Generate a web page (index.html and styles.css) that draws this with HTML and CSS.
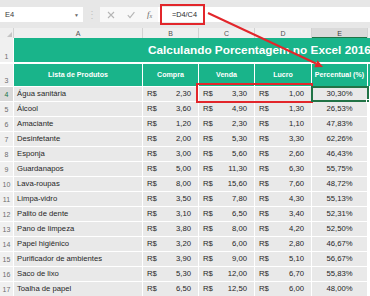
FILE: index.html
```html
<!DOCTYPE html>
<html lang="pt-BR">
<head>
<meta charset="utf-8">
<title>Calculando Porcentagem no Excel 2016</title>
<link rel="stylesheet" href="styles.css">
</head>
<body>
<div class="app">
  <div class="fbar">
    <div class="namebox"><span>E4</span><span class="dd">▼</span></div>
    <div class="grip">⋮</div>
    <div class="fbtns">
      <svg class="ico" width="8" height="8" viewBox="0 0 8 8"><path d="M1 1L7 7M7 1L1 7" stroke="#b5b5b5" stroke-width="1.1" fill="none"/></svg>
      <svg class="ico" width="8" height="8" viewBox="0 0 8 8"><path d="M0.8 4.2L3 6.6L7.4 1.2" stroke="#b5b5b5" stroke-width="1.1" fill="none"/></svg>
      <span class="fx">f<sub>x</sub></span>
    </div>
    <div class="finput">=D4/C4</div>
  </div>

  <div class="sheet">
    <div class="row colhdr">
      <div class="ch corner"><span class="tri"></span></div>
      <div class="ch">A</div>
      <div class="ch">B</div>
      <div class="ch">C</div>
      <div class="ch">D</div>
      <div class="ch sel">E</div>
      <div class="ch"></div>
    </div>

    <div class="row r1">
      <div class="rh">1</div>
      <div class="title">Calculando Porcentagem no Excel 2016</div>
    </div>

    <div class="row r3">
      <div class="rh">3</div>
      <div class="h">Lista de Produtos</div>
      <div class="h">Compra</div>
      <div class="h">Venda</div>
      <div class="h">Lucro</div>
      <div class="h">Percentual (%)</div>
      <div class="h"></div>
    </div>

    <div class="row data active">
      <div class="rh">4</div><div class="c name">Água sanitária</div>
      <div class="c money"><span>R$</span><span>2,30</span></div>
      <div class="c money"><span>R$</span><span>3,30</span></div>
      <div class="c money"><span>R$</span><span>1,00</span></div>
      <div class="c pct">30,30%</div><div class="f"></div>
    </div>
    <div class="row data">
      <div class="rh">5</div><div class="c name">Álcool</div>
      <div class="c money"><span>R$</span><span>3,60</span></div>
      <div class="c money"><span>R$</span><span>4,90</span></div>
      <div class="c money"><span>R$</span><span>1,30</span></div>
      <div class="c pct">26,53%</div><div class="f"></div>
    </div>
    <div class="row data">
      <div class="rh">6</div><div class="c name">Amaciante</div>
      <div class="c money"><span>R$</span><span>1,20</span></div>
      <div class="c money"><span>R$</span><span>2,30</span></div>
      <div class="c money"><span>R$</span><span>1,10</span></div>
      <div class="c pct">47,83%</div><div class="f"></div>
    </div>
    <div class="row data">
      <div class="rh">7</div><div class="c name">Desinfetante</div>
      <div class="c money"><span>R$</span><span>2,00</span></div>
      <div class="c money"><span>R$</span><span>5,30</span></div>
      <div class="c money"><span>R$</span><span>3,30</span></div>
      <div class="c pct">62,26%</div><div class="f"></div>
    </div>
    <div class="row data">
      <div class="rh">8</div><div class="c name">Esponja</div>
      <div class="c money"><span>R$</span><span>3,00</span></div>
      <div class="c money"><span>R$</span><span>5,60</span></div>
      <div class="c money"><span>R$</span><span>2,60</span></div>
      <div class="c pct">46,43%</div><div class="f"></div>
    </div>
    <div class="row data">
      <div class="rh">9</div><div class="c name">Guardanapos</div>
      <div class="c money"><span>R$</span><span>5,00</span></div>
      <div class="c money"><span>R$</span><span>11,30</span></div>
      <div class="c money"><span>R$</span><span>6,30</span></div>
      <div class="c pct">55,75%</div><div class="f"></div>
    </div>
    <div class="row data">
      <div class="rh">10</div><div class="c name">Lava-roupas</div>
      <div class="c money"><span>R$</span><span>8,00</span></div>
      <div class="c money"><span>R$</span><span>15,60</span></div>
      <div class="c money"><span>R$</span><span>7,60</span></div>
      <div class="c pct">48,72%</div><div class="f"></div>
    </div>
    <div class="row data">
      <div class="rh">11</div><div class="c name">Limpa-vidro</div>
      <div class="c money"><span>R$</span><span>3,50</span></div>
      <div class="c money"><span>R$</span><span>7,80</span></div>
      <div class="c money"><span>R$</span><span>4,30</span></div>
      <div class="c pct">55,13%</div><div class="f"></div>
    </div>
    <div class="row data">
      <div class="rh">12</div><div class="c name">Palito de dente</div>
      <div class="c money"><span>R$</span><span>3,10</span></div>
      <div class="c money"><span>R$</span><span>6,50</span></div>
      <div class="c money"><span>R$</span><span>3,40</span></div>
      <div class="c pct">52,31%</div><div class="f"></div>
    </div>
    <div class="row data">
      <div class="rh">13</div><div class="c name">Pano de limpeza</div>
      <div class="c money"><span>R$</span><span>3,80</span></div>
      <div class="c money"><span>R$</span><span>8,00</span></div>
      <div class="c money"><span>R$</span><span>4,20</span></div>
      <div class="c pct">52,50%</div><div class="f"></div>
    </div>
    <div class="row data">
      <div class="rh">14</div><div class="c name">Papel higiênico</div>
      <div class="c money"><span>R$</span><span>3,20</span></div>
      <div class="c money"><span>R$</span><span>6,00</span></div>
      <div class="c money"><span>R$</span><span>2,80</span></div>
      <div class="c pct">46,67%</div><div class="f"></div>
    </div>
    <div class="row data">
      <div class="rh">15</div><div class="c name">Purificador de ambientes</div>
      <div class="c money"><span>R$</span><span>3,90</span></div>
      <div class="c money"><span>R$</span><span>9,00</span></div>
      <div class="c money"><span>R$</span><span>5,10</span></div>
      <div class="c pct">56,67%</div><div class="f"></div>
    </div>
    <div class="row data">
      <div class="rh">16</div><div class="c name">Saco de lixo</div>
      <div class="c money"><span>R$</span><span>5,30</span></div>
      <div class="c money"><span>R$</span><span>12,00</span></div>
      <div class="c money"><span>R$</span><span>6,70</span></div>
      <div class="c pct">55,83%</div><div class="f"></div>
    </div>
    <div class="row data">
      <div class="rh">17</div><div class="c name">Toalha de papel</div>
      <div class="c money"><span>R$</span><span>6,50</span></div>
      <div class="c money"><span>R$</span><span>12,50</span></div>
      <div class="c money"><span>R$</span><span>6,00</span></div>
      <div class="c pct">48,00%</div><div class="f"></div>
    </div>
  </div>

  <div class="redbox formula-mark"></div>
  <div class="redbox cells-mark"></div>
  <div class="selbox"><span class="handle"></span></div>
  <svg class="arrow" width="370" height="296" viewBox="0 0 370 296">
    <line x1="208" y1="13" x2="316" y2="63.5" stroke="#e2262b" stroke-width="2"/>
    <polygon points="323,67 314.3,67.2 317.5,60.2" fill="#e2262b"/>
  </svg>
</div>
</body>
</html>
```

FILE: styles.css
```css
* { box-sizing: border-box; margin: 0; padding: 0; }

html, body {
  width: 370px;
  height: 296px;
  overflow: hidden;
  background: #ffffff;
}

body {
  font-family: "Liberation Sans", Arial, sans-serif;
  color: #262626;
}

.app {
  position: relative;
  width: 370px;
  height: 296px;
  overflow: hidden;
}

/* ---------- formula bar ---------- */
.fbar {
  height: 28px;
  background: #e7e7e7;
  display: flex;
  align-items: flex-start;
  padding-top: 7px;
}

.namebox {
  width: 83px;
  height: 15px;
  background: #ffffff;
  display: flex;
  align-items: center;
  justify-content: space-between;
  padding: 0 4px 0 5px;
  font-size: 7.5px;
  color: #3a3a3a;
}

.dd { font-size: 5px; color: #6a6a6a; }

.grip {
  width: 17px;
  height: 15px;
  display: flex;
  align-items: center;
  justify-content: center;
  color: #c2c2c2;
  font-size: 10px;
}

.fbtns {
  width: 58px;
  height: 15px;
  background: #f8f8f8;
  display: flex;
  align-items: center;
  padding-left: 7px;
  gap: 12px;
}

.fx {
  font-family: "Liberation Serif", serif;
  font-style: italic;
  font-size: 9px;
  color: #6a6a6a;
  line-height: 1;
}
.fx sub { font-size: 6px; vertical-align: -1px; }

.finput {
  flex: 1;
  height: 15px;
  background: #ffffff;
  padding-left: 14px;
  font-size: 7.3px;
  line-height: 15px;
  color: #2a2a2a;
}

/* ---------- sheet ---------- */
.sheet {
  background: #ffffff;
  display: flex;
  flex-direction: column;
}

.row {
  display: grid;
  grid-template-columns: 13px 128px 55px 55px 56px 55px 1fr;
  column-gap: 1px;
}

.colhdr {
  height: 10px;
  background: #d2d2d2;
}
.ch {
  background: #efefef;
  font-size: 7px;
  color: #505050;
  display: flex;
  align-items: center;
  justify-content: center;
  line-height: 1;
}
.ch.sel { background: #dadada; color: #3c3c3c; box-shadow: inset 0 -1px 0 #217346; }
.corner { position: relative; }
.tri {
  position: absolute;
  right: 1px;
  bottom: 1px;
  width: 0;
  height: 0;
  border-left: 5px solid transparent;
  border-bottom: 5px solid #c4c4c4;
}

.rh {
  background: #f0f0f0;
  font-size: 7px;
  color: #6e6e6e;
  display: flex;
  align-items: center;
  justify-content: center;
}

.r1 { height: 24px; margin-bottom: 2px; }
.r1 .rh, .r3 .rh { align-items: flex-end; padding-bottom: 2px; }

.title {
  grid-column: 2 / -1;
  background: #19b48a;
  color: #ffffff;
  font-weight: bold;
  font-size: 11.8px;
  padding-left: 134px;
  white-space: nowrap;
  overflow: hidden;
  display: flex;
  align-items: center;
}

.r3 { height: 22px; margin-bottom: 1px; }
.h {
  background: #19b48a;
  color: #ffffff;
  font-weight: bold;
  font-size: 7.1px;
  display: flex;
  align-items: center;
  justify-content: center;
  white-space: nowrap;
}

.data { height: 14px; margin-bottom: 1px; }
.c {
  background: #e9e9e9;
  font-size: 7.7px;
  line-height: 14px;
  white-space: nowrap;
  overflow: hidden;
}
.name { padding-left: 3px; }
.money {
  display: flex;
  justify-content: space-between;
  padding: 0 7px 0 4px;
}
.pct { text-align: center; }
.f { background: #ffffff; }

.active .rh { background: #d9d9d9; color: #217346; }

/* ---------- overlays ---------- */
.redbox {
  position: absolute;
  border: 2px solid #e2262b;
}
.formula-mark { left: 160px; top: 4px; width: 45px; height: 21px; }
.cells-mark { left: 196px; top: 83px; width: 117px; height: 20px; }

.selbox {
  position: absolute;
  left: 311px;
  top: 86px;
  width: 58px;
  height: 16px;
  border: 2px solid #217346;
}
.handle {
  position: absolute;
  right: -3px;
  bottom: -3px;
  width: 4px;
  height: 4px;
  background: #217346;
  border: 1px solid #ffffff;
}

.arrow {
  position: absolute;
  left: 0;
  top: 0;
  pointer-events: none;
}
```
